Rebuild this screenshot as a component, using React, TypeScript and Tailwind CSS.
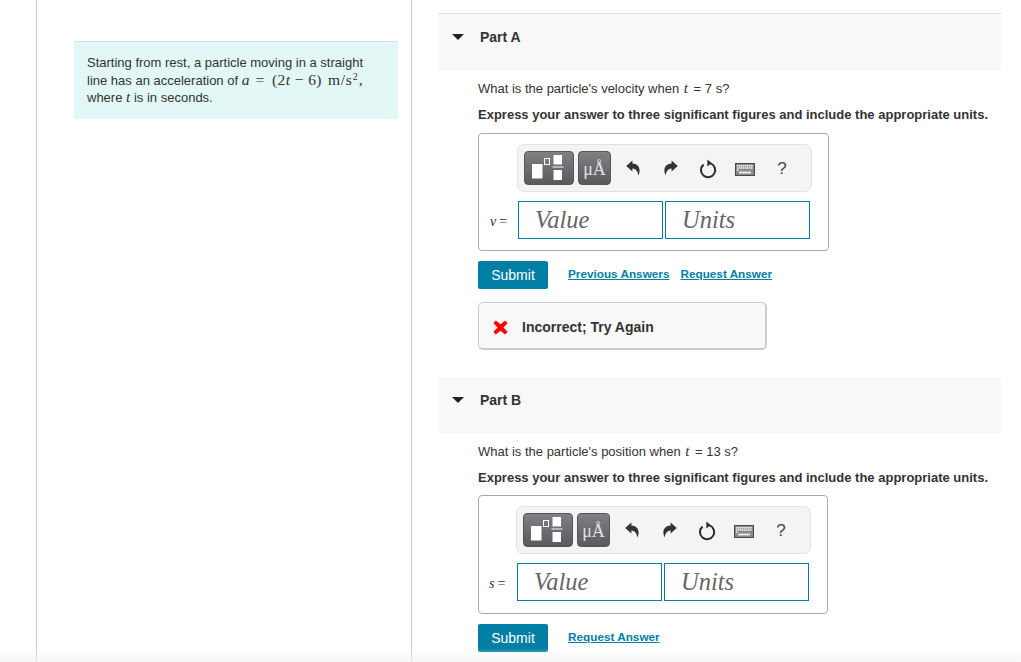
import React from "react";

const serif = { fontFamily: '"Liberation Serif", serif' };

function UndoIcon({ flip = false }: { flip?: boolean }) {
  return (
    <svg width="14" height="16" viewBox="0 0 14 16" className={flip ? "-scale-x-100" : ""}>
      <path d="M0.2 6 L6.4 0.4 V3.6 C10.8 3.8 13.6 6.4 13.6 10.6 C13.6 12.4 13 14.2 12.2 15.6 C12 12.4 10.6 9 6.4 8.6 V11.6 Z" fill="#333" />
    </svg>
  );
}

function ReloadIcon() {
  return (
    <svg width="18" height="20" viewBox="0 0 18 20">
      <path d="M11.4 4.4 A7.1 7.1 0 1 1 4.6 5.6" fill="none" stroke="#2a2a2a" strokeWidth="2" />
      <path d="M8.4 0.4 L12.6 4 L8.4 7.6 Z" fill="#2a2a2a" />
    </svg>
  );
}

function KeyboardIcon() {
  const keys: React.ReactNode[] = [];
  for (let r = 0; r < 2; r++) {
    for (let c = 0; c < 8; c++) {
      keys.push(<rect key={`${r}-${c}`} x={2 + c * 2} y={2 + r * 2.2} width="1.5" height="1.6" fill="#eee" />);
    }
  }
  return (
    <svg width="20" height="13" viewBox="0 0 20 13">
      <rect x="0.5" y="0.5" width="19" height="12" fill="#8a8a8a" stroke="#4a4a4a" />
      {keys}
      <rect x="2" y="6.4" width="1.5" height="1.6" fill="#eee" />
      <rect x="4" y="8.6" width="12" height="1.8" fill="#eee" />
    </svg>
  );
}

function Toolbar() {
  return (
    <div className="flex h-[48px] w-[295px] items-center rounded-[7px] border border-[#e2e2e2] bg-[#f4f4f4] pl-[6px]">
      <button className="flex h-[34px] w-[50px] items-center justify-center rounded-[4px] border border-[#56565a] bg-gradient-to-b from-[#808085] to-[#5a5a5e]">
        <svg width="48" height="32" viewBox="0 0 48 32">
          <rect x="7" y="12" width="10.5" height="14.5" fill="#fff" />
          <rect x="19.5" y="6.5" width="5" height="6" fill="none" stroke="#fff" strokeWidth="1" />
          <rect x="28.5" y="3" width="8.5" height="9.5" fill="#fff" />
          <rect x="27.5" y="14.5" width="11" height="1" fill="#fff" />
          <rect x="28.5" y="18" width="8.5" height="10" fill="#fff" />
        </svg>
      </button>
      <button
        style={serif}
        className="ml-[4px] flex h-[34px] w-[33px] items-center justify-center rounded-[4px] border border-[#56565a] bg-gradient-to-b from-[#808085] to-[#5a5a5e] pt-[1px] text-[18px] leading-none text-[#e2e2e2]"
      >
        μÅ
      </button>
      <div className="ml-[3px] flex w-[38px] justify-center"><UndoIcon /></div>
      <div className="flex w-[38px] justify-center"><UndoIcon flip /></div>
      <div className="flex w-[36px] justify-center pt-[1px]"><ReloadIcon /></div>
      <div className="flex w-[38px] justify-center pt-[2px]"><KeyboardIcon /></div>
      <div className="flex w-[36px] justify-center text-[17px] leading-none text-[#444]">?</div>
    </div>
  );
}

function AnswerBox({ label, wide }: { label: string; wide?: boolean }) {
  return (
    <div
      className={`flex flex-col rounded-[4px] border border-[#aaa] pt-[10px] ${
        wide ? "h-[118px] w-[351px] pl-[38px]" : "h-[119px] w-[350px] pl-[37px]"
      }`}
    >
      <Toolbar />
      <div className="relative mt-[9px] flex h-[38px] gap-[2px] pl-[1px]">
        <span style={serif} className="absolute left-[-27px] top-[10px] text-[14px] text-[#333]">
          <i>{label}</i>
          <span className="ml-[3px]">=</span>
        </span>
        {["Value", "Units"].map((p) => (
          <input
            key={p}
            placeholder={p}
            readOnly
            style={serif}
            className="h-[38px] w-[145px] border border-[#007ea3] bg-white pl-[16px] text-[24.5px] italic outline-none placeholder:text-[#666]"
          />
        ))}
      </div>
    </div>
  );
}

function PartHeader({ title, border }: { title: string; border?: boolean }) {
  return (
    <div className={`flex items-start bg-[#f9f9f9] pl-[14px] ${border ? "h-[58px] border-t border-[#ddd] pt-[15px]" : "h-[56px] pt-[15px]"}`}>
      <span className="mt-[5px] h-0 w-0 border-x-[6px] border-t-[6px] border-x-transparent border-t-[#222]" />
      <h2 className="ml-[16px] text-[14px] font-bold leading-[16px] text-[#333]">{title}</h2>
    </div>
  );
}

function Question({ symbol, value }: { symbol: string; value: string }) {
  return (
    <div className="pl-[40px] text-[13px] leading-[16px] text-[#333]">
      <p>
        What is the particle's {symbol} when <i style={serif} className="ml-[1px] mr-[2px] text-[15px] leading-none">t</i> = {value} s?
      </p>
      <p className="mt-[10px] font-bold">Express your answer to three significant figures and include the appropriate units.</p>
    </div>
  );
}

function SubmitRow({ links }: { links: string[] }) {
  return (
    <div className="flex h-[28px] items-center">
      <button className="h-[28px] w-[70px] rounded-[2px] bg-[#007ea3] text-[14px] text-white">Submit</button>
      <div className="ml-[20px] flex gap-[11px] pb-[3px]">
        {links.map((l) => (
          <a key={l} href="#" className="text-[11.75px] font-bold text-[#007ea3] underline">
            {l}
          </a>
        ))}
      </div>
    </div>
  );
}

export default function App() {
  return (
    <div style={{ fontFamily: '"Liberation Sans", Arial, sans-serif' }} className="relative flex h-[662px] overflow-hidden bg-white">
      {/* left gutter */}
      <div className="w-[36px] shrink-0" />

      {/* Problem intro */}
      <aside className="w-[376px] shrink-0 border-x border-[#c9ced6] pl-[37px] pt-[41px]">
        <div className="h-[78px] w-[324px] border-t border-[#ddd] bg-[#e2f7f6] pl-[13px] pt-[12px] text-[13px] leading-[17.5px] text-[#333]">
          <p>Starting from rest, a particle moving in a straight</p>
          <p>
            line has an acceleration of <i style={serif} className="text-[15.5px] leading-none">a</i>
            <span style={serif} className="ml-[6px] text-[15.5px] leading-none">
              = <span className="ml-[4px] tracking-[0.4px]">(2<i>t</i> − 6)</span>
              <span className="ml-[6px] tracking-[0.8px]">m/s</span>
              <sup className="text-[10px] leading-[0]">2</sup>
              <span className="ml-[1px]">,</span>
            </span>
          </p>
          <p>
            where <i style={serif} className="text-[15.5px] leading-none">t</i> is in seconds.
          </p>
        </div>
      </aside>

      {/* Parts */}
      <main className="ml-[26px] w-[563px] shrink-0 pt-[13px]">
        <PartHeader title="Part A" border />
        <div className="mt-[10px]">
          <Question symbol="velocity" value="7" />
        </div>
        <div className="ml-[40px] mt-[10px]">
          <AnswerBox label="v" wide />
          <div className="mt-[10px]">
            <SubmitRow links={["Previous Answers", "Request Answer"]} />
          </div>
          <div className="mt-[13px] flex h-[48px] w-[289px] items-center rounded-[5px] border border-b-2 border-r-2 border-[#ccc] bg-[#f9f9f9] pl-[14px] pt-[3px] text-[14px] font-bold text-[#333]">
            <svg width="15" height="15" viewBox="0 0 15 15">
              <path d="M2.8 0.6 L7.5 4.2 L12.2 0.6 L14.6 3.2 L10.4 7.5 L14.6 11.8 L12.2 14.4 L7.5 10.8 L2.8 14.4 L0.4 11.8 L4.6 7.5 L0.4 3.2 Z" fill="#f00" />
            </svg>
            <span className="ml-[14px]">Incorrect; Try Again</span>
          </div>
        </div>

        <div className="mt-[27px]">
          <PartHeader title="Part B" />
        </div>
        <div className="mt-[11px]">
          <Question symbol="position" value="13" />
        </div>
        <div className="ml-[40px] mt-[9px]">
          <AnswerBox label="s" />
          <div className="mt-[10px]">
            <SubmitRow links={["Request Answer"]} />
          </div>
        </div>
      </main>

      {/* page fade at the bottom edge */}
      <div className="pointer-events-none absolute inset-x-0 bottom-0 h-[14px] bg-gradient-to-b from-transparent to-[#f3f3f3]/70" />
    </div>
  );
}
